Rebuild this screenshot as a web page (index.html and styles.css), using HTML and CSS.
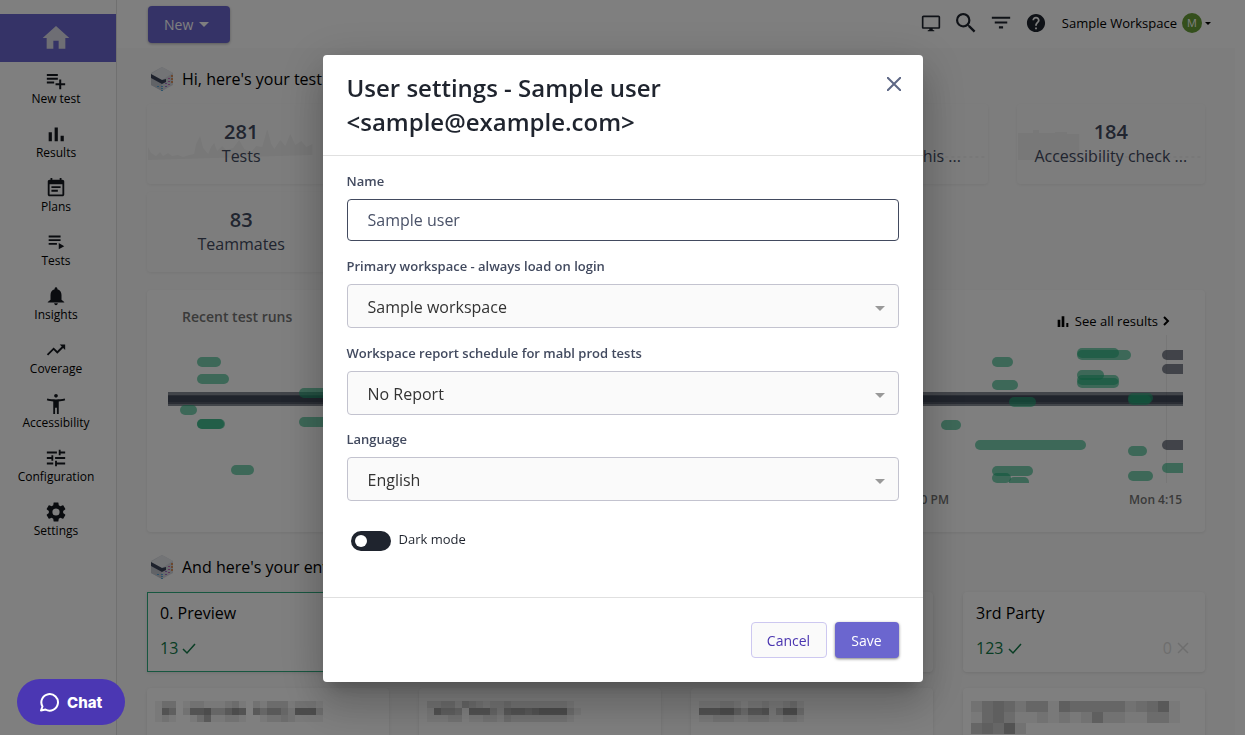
FILE: index.html
```html
<!DOCTYPE html>
<html lang="en">
<head>
<meta charset="UTF-8">
<meta name="viewport" content="width=device-width, initial-scale=1.0">
<title>Home</title>
<link rel="stylesheet" href="styles.css">
</head>
<body>
<div class="app">
    <nav class="sidebar">
        <a href="#" class="home" aria-label="Home">
            <svg width="32" height="32" viewBox="0 0 24 24"><path d="M10 20v-6h4v6h5v-8h3L12 3 2 12h3v8z"/></svg>
        </a>
        <a href="#" class="nav-item">
            <svg viewBox="0 0 24 24"><path d="M14 9.500H2v2.200h12zM14 5.500H2v2.200h12zM2 15.700h8v-2.200H2zM15.500 15.500v-4h2.200v4H22v2.200h-4.300V22h-2.200v-4.300h-4v-2.200z"/></svg>
            <span>New test</span>
        </a>
        <a href="#" class="nav-item">
            <svg viewBox="0 0 24 24"><path d="M4 10h3.500v10H4zm6.500-5H14v15h-3.500zM17 14h3.500v6H17z"/></svg>
            <span>Results</span>
        </a>
        <a href="#" class="nav-item">
            <svg viewBox="0 0 24 24"><path d="M17 10H7v2h10v-2zm2-7h-1V1h-2v2H8V1H6v2H5c-1.100 0-2 .9-2 2v14c0 1.100.9 2 2 2h14c1.100 0 2-.9 2-2V5c0-1.100-.9-2-2-2zm0 16H5V8h14v11zm-5-5H7v2h7v-2z"/></svg>
            <span>Plans</span>
        </a>
        <a href="#" class="nav-item">
            <svg viewBox="0 0 24 24"><path d="M4 5h13v2H4zm0 4h13v2H4zm0 4h9v2H4zm11 0v7l6-3.500z"/></svg>
            <span>Tests</span>
        </a>
        <a href="#" class="nav-item">
            <svg viewBox="0 0 24 24"><path d="M12 22c1.100 0 2-.9 2-2h-4c0 1.100.9 2 2 2zm6-6v-5c0-3.070-1.640-5.640-4.500-6.320V4c0-.83-.67-1.500-1.500-1.500s-1.500.67-1.500 1.500v.68C7.630 5.360 6 7.920 6 11v5l-3 2.500V19h18v-.5z"/></svg>
            <span>Insights</span>
        </a>
        <a href="#" class="nav-item">
            <svg viewBox="0 0 24 24"><path d="M16 6l2.290 2.290-4.880 4.880-4-4L2 16.590 3.410 18l6-6 4 4 6.300-6.290L22 12V6z"/></svg>
            <span>Coverage</span>
        </a>
        <a href="#" class="nav-item">
            <svg viewBox="0 0 24 24"><path d="M12 1c1.100 0 2 .9 2 2s-.9 2-2 2-2-.9-2-2 .9-2 2-2zm10 7c-2 .6-5 1-7 1.200V23h-2v-7h-2v7H9V9.200C7 9 4 8.600 2 8l.5-2C5.500 6.800 9 7 12 7s6.500-.2 9.500-1z"/></svg>
            <span>Accessibility</span>
        </a>
        <a href="#" class="nav-item">
            <svg viewBox="0 0 24 24"><path d="M2 17v2h7v-2H2zM2 5v2h11V5H2zm11 16v-2h9v-2h-9v-2h-2v6h2zM7 9v2H2v2h5v2h2V9H7zm15 4v-2H11v2h11zm-7-4h2V7h5V5h-5V3h-2v6z"/></svg>
            <span>Configuration</span>
        </a>
        <a href="#" class="nav-item">
            <svg viewBox="1 1 22 22"><path fill-rule="evenodd" d="M19.140 12.940c.04-.3.060-.61.060-.94s-.02-.64-.07-.94l2.030-1.580c.18-.14.23-.41.120-.61l-1.920-3.320c-.12-.22-.37-.29-.59-.22l-2.390.96c-.5-.38-1.030-.7-1.620-.94L14.400 2.810c-.04-.24-.24-.41-.48-.41h-3.840c-.24 0-.43.17-.47.41L9.250 5.350c-.59.24-1.130.57-1.620.94l-2.390-.96c-.22-.08-.47 0-.59.22L2.740 8.870c-.12.21-.08.47.120.61l2.030 1.580c-.05.3-.09.63-.09.94s.02.64.070.94l-2.030 1.580c-.18.14-.23.41-.12.61l1.920 3.320c.12.22.37.29.59.22l2.390-.96c.5.38 1.030.7 1.620.94l.36 2.540c.05.24.24.41.48.41h3.840c.24 0 .44-.17.47-.41l.36-2.540c.59-.24 1.130-.56 1.620-.94l2.390.96c.22.08.47 0 .59-.22l1.920-3.320c.12-.22.070-.47-.12-.61l-2.010-1.580zM12 15.600a3.600 3.600 0 110-7.200 3.600 3.600 0 010 7.200z"/></svg>
            <span>Settings</span>
        </a>
    </nav>

    <div class="page">
        <header class="topbar">
            <button type="button" class="btn-new">New <i class="caret"></i></button>
            <div class="tools">
                <svg viewBox="0 0 24 24"><path d="M21 3H3c-1.100 0-2 .9-2 2v12c0 1.100.9 2 2 2h7v1l-2 1v1h8v-1l-2-1v-1h7c1.100 0 2-.9 2-2V5c0-1.100-.9-2-2-2zm0 14H3V5h18v12z"/></svg>
                <svg viewBox="3 3 18 18"><path d="M15.500 14h-.79l-.28-.27A6.470 6.470 0 0016 9.500 6.500 6.500 0 109.500 16c1.610 0 3.090-.59 4.230-1.570l.27.28v.79l5 4.990L20.490 19l-4.990-5zm-6 0C7.010 14 5 11.990 5 9.500S7.010 5 9.500 5 14 7.010 14 9.500 11.990 14 9.500 14z"/></svg>
                <svg viewBox="0 0 24 24"><path d="M9.500 18.500h5V16h-5v2.500zM1 4.500V7h22V4.500H1zm3.500 8.200h15v-2.400h-15z"/></svg>
                <svg viewBox="1 1 22 22"><path d="M12 2C6.480 2 2 6.480 2 12s4.480 10 10 10 10-4.480 10-10S17.520 2 12 2zm1 17h-2v-2h2v2zm2.070-7.750l-.9.92C13.450 12.900 13 13.500 13 15h-2v-.5c0-1.100.45-2.100 1.170-2.830l1.240-1.260c.37-.36.59-.86.59-1.410 0-1.100-.9-2-2-2s-2 .9-2 2H8c0-2.210 1.790-4 4-4s4 1.790 4 4c0 .88-.36 1.680-.93 2.250z"/></svg>
            </div>
            <div class="workspace">
                <span>Sample Workspace</span>
                <span class="avatar">M</span>
                <i class="caret caret-small"></i>
            </div>
        </header>

        <main class="content">
            <h2 class="section-title"><svg class="logo" viewBox="0 0 24 24"><use href="#cube"/></svg>Hi, here's your test</h2>

            <div class="stats">
                <div class="stat">
                    <svg class="spark" viewBox="0 0 188 30" preserveAspectRatio="none"><path d="M1 30V17l3 6 5 3 4-4 3 4 5-3 4 3 6-1 5 2 6-2 5-1 2-10 4-8 3 12 5 6 3-7 3-4 3 8 5-5 4 4 7-2 6-8 5 9 7 3 5-6 6 1 5-18 4 15 3 5 6-9 5 6 5-12 5 11 6-4 5 6 6-3v11z"/></svg>
                    <strong>281</strong><span>Tests</span>
                </div>
                <div class="stat"></div>
                <div class="stat"></div>
                <div class="stat">
                    <svg class="spark" viewBox="0 0 188 30" preserveAspectRatio="none"><path class="dots" d="M2 27h184"/></svg>
                    <strong>965</strong><span>Test runs in this ...</span>
                </div>
                <div class="stat">
                    <svg class="spark" viewBox="0 0 188 30" preserveAspectRatio="none"><path d="M1 30V3h15V0h6v3h16V2h12v2h12v26z"/><path class="dots" d="M66 27h120"/></svg>
                    <strong>184</strong><span>Accessibility check ...</span>
                </div>
                <div class="stat"><strong>83</strong><span>Teammates</span></div>
            </div>

            <section class="runs">
                <div class="runs-head">
                    <h3>Recent test runs</h3>
                    <a href="#" class="see-all">
                        <svg width="16" height="16" viewBox="0 0 24 24"><path d="M4 10h4v11H4zm6-5h4v16h-4zm7 10h3v6h-3z"/></svg>
                        See all results
                        <svg width="8" height="10" viewBox="0 0 8 10"><path class="line" d="M2 1l4 4-4 4"/></svg>
                    </a>
                </div>
                <svg class="timeline" viewBox="0 0 1015 148">
                    <path class="grid" d="M998.500 0v148"/>
                    <g class="busy">
                        <rect x="0" y="57" width="1015" height="10"/>
                        <rect x="0" y="61" width="1015" height="8"/>
                        <rect x="0" y="60" width="1015" height="11"/>
                    </g>
                    <g class="other">
                        <rect x="994" y="15" width="40" height="10" rx="5"/>
                        <rect x="994" y="29" width="40" height="10" rx="5"/>
                        <rect x="994" y="105" width="40" height="10" rx="5"/>
                    </g>
                    <g class="passed">
                        <rect x="29" y="22" width="24" height="10" rx="5"/>
                        <rect x="29" y="39" width="32" height="10" rx="5"/>
                        <rect x="12" y="70" width="17" height="10" rx="5"/>
                        <rect x="29" y="84" width="27" height="10" rx="5"/>
                        <rect x="29" y="84" width="28" height="10" rx="5"/>
                        <rect x="131" y="53" width="44" height="10" rx="5"/>
                        <rect x="131" y="82" width="44" height="10" rx="5"/>
                        <rect x="63" y="130" width="23" height="10" rx="5"/>
                        <rect x="824" y="22" width="21" height="10" rx="5"/>
                        <rect x="824" y="45" width="26" height="10" rx="5"/>
                        <rect x="841" y="62" width="27" height="10" rx="5"/>
                        <rect x="773" y="85" width="20" height="10" rx="5"/>
                        <rect x="807" y="105" width="111" height="10" rx="5"/>
                        <rect x="824" y="131" width="41" height="10" rx="5"/>
                        <rect x="824" y="138" width="19" height="10" rx="5"/>
                        <rect x="841" y="142" width="20" height="10" rx="5"/>
                        <rect x="909" y="13" width="42" height="10" rx="5"/>
                        <rect x="909" y="15" width="54" height="10" rx="5"/>
                        <rect x="909" y="35" width="27" height="10" rx="5"/>
                        <rect x="909" y="40" width="42" height="10" rx="5"/>
                        <rect x="909" y="43" width="42" height="10" rx="5"/>
                        <rect x="960" y="58" width="25" height="10" rx="5"/>
                        <rect x="960" y="60" width="23" height="10" rx="5"/>
                        <rect x="960" y="111" width="19" height="10" rx="5"/>
                        <rect x="960" y="136" width="25" height="10" rx="5"/>
                        <rect x="994" y="128" width="40" height="10" rx="5"/>
                    </g>
                </svg>
                <div class="axis"><span>3:30 PM</span><span>Mon 4:15</span></div>
            </section>

            <h2 class="section-title"><svg class="logo" viewBox="0 0 24 24"><use href="#cube"/></svg>And here's your environments</h2>

            <div class="suites">
                <div class="suite selected">
                    <h4>0. Preview</h4>
                    <p><span class="ok">13 <svg width="14" height="14" viewBox="0 0 14 14"><path class="line" d="M1 8l4 4 8-9"/></svg></span></p>
                </div>
                <div class="suite"></div>
                <div class="suite"></div>
                <div class="suite">
                    <h4>3rd Party</h4>
                    <p>
                        <span class="ok">123 <svg width="14" height="14" viewBox="0 0 14 14"><path class="line" d="M1 8l4 4 8-9"/></svg></span>
                        <span class="bad">0 <svg width="14" height="14" viewBox="0 0 14 14"><path class="line" d="M2 2l10 10M12 2L2 12"/></svg></span>
                    </p>
                </div>
                <div class="suite masked"><svg class="mosaic" data-cell="7" data-rows="133012211123102133312221,175027784468706466428883,121001361122100122321111"></svg></div>
                <div class="suite masked"><svg class="mosaic" data-cell="7" data-rows="2233143212232222222210,1755407774267767888831,1112201122132222222210"></svg></div>
                <div class="suite masked"><svg class="mosaic" data-cell="7" data-rows="111221011211231,777885366714883,112221122211221"></svg></div>
                <div class="suite masked"><svg class="mosaic" data-cell="11" data-rows="2454244154444423461,1453112121252211331,4547200000000000000"></svg></div>
            </div>
        </main>
    </div>
</div>

<!-- shared logo -->
<svg class="defs" width="0" height="0">
    <symbol id="cube" viewBox="0 0 24 24">
        <path fill="#d3d6dd" d="M12 0l11 6v12l-11 6-11-6V6z"/>
        <path fill="#e6e8ec" d="M12 0l11 6-11 7L1 7z"/>
        <path fill="#c2c6cf" d="M1 11l11 5v8L1 18z"/>
        <path fill="#3a4258" d="M1 7l11 6 4-1v3l-4 2-11-6z"/>
        <path stroke="#d9905f" stroke-width="2" stroke-dasharray="2 1" d="M22 8v9"/>
        <path stroke="#c466b4" stroke-width="2" stroke-dasharray="1 2" d="M19 11v8"/>
        <path stroke="#a070c8" stroke-width="2" stroke-dasharray="1 2" d="M16 16v6"/>
        <path stroke="#5aa6d6" stroke-width="2" stroke-dasharray="1 1" d="M12 19v5M8 19v2"/>
    </symbol>
</svg>

<div class="backdrop">
    <form class="modal" role="dialog" aria-labelledby="modal-title">
        <div class="modal-head">
            <h1 id="modal-title">User settings - Sample user &lt;sample@example.com&gt;</h1>
            <button type="button" class="close" aria-label="Close">
                <svg width="14" height="14" viewBox="0 0 14 14"><path class="line" d="M0 0l14 14M14 0L0 14"/></svg>
            </button>
        </div>
        <div class="modal-body">
            <label for="name">Name</label>
            <input type="text" id="name" class="field" value="Sample user">

            <label for="workspace">Primary workspace - always load on login</label>
            <div class="select">
                <select id="workspace" class="field"><option>Sample workspace</option></select>
            </div>

            <label for="report">Workspace report schedule for mabl prod tests</label>
            <div class="select">
                <select id="report" class="field"><option>No Report</option></select>
            </div>

            <label for="language">Language</label>
            <div class="select">
                <select id="language" class="field"><option>English</option></select>
            </div>

            <div class="switch-row">
                <input type="checkbox" id="dark" class="switch">
                <label for="dark">Dark mode</label>
            </div>
        </div>
        <div class="modal-foot">
            <button type="button" class="btn btn-cancel">Cancel</button>
            <button type="button" class="btn btn-save">Save</button>
        </div>
    </form>
</div>

<button type="button" class="chat">
    <svg width="20" height="20" viewBox="0 0 20 20"><path d="M2 18.500L3.500 14.500A8.300 8.300 0 1 1 6.500 17.500z"/></svg>
    Chat
</button>

<script src="script.js"></script>
</body>
</html>
```

FILE: styles.css
```css
* {
    box-sizing: border-box;
}
body {
    margin: 0;
    font-family: "Open Sans", "Noto Sans", sans-serif;
    font-size: 16px;
    color: #1f242e;
    background-color: #fff;
    overflow: hidden;
}
h1, h2, h3, h4, p {
    margin: 0;
    font-weight: 400;
}
a {
    color: inherit;
    text-decoration: none;
}
button, input, select {
    font-family: inherit;
}
.defs {
    position: absolute;
}
.line {
    fill: none;
    stroke: currentColor;
    stroke-width: 2;
}
.caret {
    display: inline-block;
    border: 5px solid transparent;
    border-top-color: currentColor;
    border-bottom: 0;
}
.caret-small {
    border-width: 3px;
    border-bottom: 0;
}
.app {
    display: flex;
    height: 100vh;
    overflow: hidden;
}

/* Sidebar */
.sidebar {
    flex: 0 0 117px;
    padding-top: 14px;
    border-right: 1px solid #e0e0e0;
}
.home {
    display: flex;
    align-items: center;
    justify-content: center;
    height: 48px;
    margin-bottom: 7px;
    padding-right: 4px;
    background-color: #6b66cf;
    fill: #dddde8;
}
.nav-item {
    display: flex;
    flex-direction: column;
    align-items: center;
    height: 54px;
    padding-right: 4px;
    font-size: 12px;
    line-height: 16px;
    color: #000;
}
.nav-item svg {
    width: 22px;
    height: 22px;
    fill: #15181f;
}

/* Top bar */
.page {
    flex: 1;
    min-width: 0;
}
.topbar {
    display: flex;
    align-items: center;
    height: 48px;
    padding: 0 34px 0 31px;
}
.btn-new {
    display: flex;
    align-items: center;
    gap: 6px;
    height: 37px;
    padding: 0 21px 0 16px;
    border: none;
    border-radius: 4px;
    background-color: #6b66cf;
    box-shadow: 0 1px 3px rgba(0,0,0,0.3);
    color: #fff;
    font-size: 14px;
}
.tools {
    display: flex;
    gap: 15px;
    margin-left: auto;
    padding-bottom: 2px;
}
.tools svg {
    width: 20px;
    height: 20px;
    fill: #1f242e;
}
.workspace {
    display: flex;
    align-items: center;
    gap: 5px;
    margin-left: 16px;
    padding-bottom: 2px;
    font-size: 13px;
    color: #000;
}
.avatar {
    width: 20px;
    height: 20px;
    border-radius: 50%;
    background-color: #689f38;
    color: #fff;
    font-size: 11px;
    line-height: 20px;
    text-align: center;
}
.workspace .caret {
    margin-left: -2px;
}

/* Content */
.content {
    height: 100%;
    margin-right: 10px;
    padding: 19px 30px;
    background-color: #fafafa;
}
.section-title {
    display: flex;
    align-items: center;
    gap: 8px;
    height: 24px;
    margin-bottom: 13px;
    font-size: 16px;
    color: #000;
}
.logo {
    width: 24px;
    height: 24px;
    margin-left: 3px;
}
.stats {
    display: grid;
    grid-template-columns: repeat(5, 1fr);
    gap: 8px 29px;
}
.stat {
    display: flex;
    position: relative;
    flex-direction: column;
    align-items: center;
    height: 80px;
    padding-top: 16px;
    border-radius: 4px;
    background-color: #fbfbfb;
    box-shadow: 0 1px 3px rgba(0,0,0,0.06);
    line-height: 24px;
    color: #424a5f;
}
.stat strong {
    position: relative;
    font-size: 20px;
    font-weight: 600;
}
.stat span {
    position: relative;
}
.spark {
    position: absolute;
    left: 0;
    top: 26px;
    width: 100%;
    height: 30px;
    fill: #f0f0f0;
}
.dots {
    fill: none;
    stroke: #f0f0f0;
    stroke-width: 2;
    stroke-dasharray: 3 3;
}
.runs {
    height: 242px;
    margin: 18px 0 23px;
    padding: 16px 22px 0 21px;
    border-radius: 4px;
    background-color: #fff;
    box-shadow: 0 1px 3px rgba(0,0,0,0.08);
}
.runs-head {
    display: flex;
    justify-content: space-between;
    padding: 0 13px 0 14px;
}
.runs-head h3 {
    font-size: 14px;
    font-weight: 600;
    line-height: 22px;
    color: #757575;
}
.see-all {
    display: flex;
    align-items: center;
    gap: 4px;
    height: 29px;
    font-size: 13px;
    color: #000;
}
.timeline {
    display: block;
    width: 100%;
}
.grid {
    stroke: #eee;
}
.busy {
    fill: #333c4d;
    fill-opacity: 0.6;
}
.other {
    fill: #2f374a;
    fill-opacity: 0.6;
}
.passed {
    fill: #22b17c;
    fill-opacity: 0.6;
}
.axis {
    display: flex;
    justify-content: flex-end;
    gap: 180px;
    padding: 9px 1px 0 0;
    font-size: 12px;
    font-weight: 600;
    line-height: 16px;
    color: #757575;
}
.suites {
    display: grid;
    grid-template-columns: repeat(4, 1fr);
    gap: 16px 30px;
}
.suite {
    height: 80px;
    padding: 8px 13px;
    border-radius: 4px;
    background-color: #fff;
    box-shadow: 0 1px 3px rgba(0,0,0,0.1);
}
.suite h4 {
    font-size: 16px;
    line-height: 26px;
    color: #000;
}
.suite p {
    display: flex;
    justify-content: space-between;
    padding: 10px 2px 0 0;
    line-height: 24px;
}
.suite .line {
    stroke-width: 1.5;
}
.selected {
    padding: 7px 12px;
    border: 1px solid #2fae80;
    border-radius: 0;
}
.ok {
    color: #127a48;
}
.bad {
    color: #dcdcdc;
}
.ok svg, .bad svg {
    vertical-align: -1px;
}
.masked {
    padding: 13px 8px;
}
.mosaic {
    display: block;
}

/* Modal */
.backdrop {
    display: flex;
    position: fixed;
    inset: 0;
    align-items: center;
    justify-content: center;
    padding-top: 2px;
    background-color: rgba(0,0,0,0.5);
}
.modal {
    width: 600px;
    border-radius: 4px;
    background-color: #fff;
    box-shadow: 0 11px 15px -7px rgba(0,0,0,0.2), 0 24px 38px 3px rgba(0,0,0,0.14), 0 9px 46px 8px rgba(0,0,0,0.12);
}
.modal-head {
    display: flex;
    align-items: flex-start;
    justify-content: space-between;
    padding: 16px 22px 16px 24px;
    border-bottom: 1px solid #e0e0e0;
}
.modal-head h1 {
    max-width: 400px;
    font-size: 24px;
    font-weight: 600;
    line-height: 34px;
}
.close {
    display: flex;
    margin-top: 6px;
    padding: 0;
    border: none;
    background: none;
    color: #5d6785;
}
.modal-body {
    padding: 16px 24px 46px;
    border-bottom: 1px solid #e0e0e0;
}
.modal-body > label {
    display: block;
    margin-bottom: 8px;
    font-size: 13px;
    font-weight: 600;
    line-height: 19px;
    color: #424a5f;
}
.field {
    display: block;
    width: 100%;
    height: 44px;
    padding: 2px 20px 0;
    border: 1px solid #c3c3cf;
    border-radius: 4px;
    background-color: #fafafa;
    color: #333;
    font-size: 16px;
    appearance: none;
}
input.field {
    height: 42px;
    margin-bottom: 16px;
    padding: 0 20px;
    border-color: #424a5f;
    background-color: #fff;
    color: #4a5268;
}
.select {
    position: relative;
    margin-bottom: 16px;
}
.select::after {
    content: "";
    position: absolute;
    right: 14px;
    top: 22px;
    border: 5px solid transparent;
    border-top-color: #999;
    border-bottom: 0;
}
.modal-body .select:nth-of-type(2) {
    margin-bottom: 15px;
}
.switch-row {
    display: flex;
    align-items: flex-start;
    gap: 8px;
    margin-top: 30px;
    padding-left: 4px;
    font-size: 13px;
    line-height: 17px;
}
.switch {
    width: 40px;
    height: 20px;
    margin: 0;
    padding: 4px;
    border-radius: 10px;
    background-color: #1f242e;
    appearance: none;
}
.switch::before {
    content: "";
    display: block;
    width: 12px;
    height: 12px;
    border-radius: 50%;
    background-color: #fff;
}
.switch:checked::before {
    margin-left: 20px;
}
.modal-foot {
    display: flex;
    justify-content: flex-end;
    gap: 8px;
    padding: 24px;
}
.btn {
    height: 36px;
    padding: 0 16px;
    border: none;
    border-radius: 4px;
    font-size: 14px;
}
.btn-cancel {
    min-width: 76px;
    padding: 0 15px;
    border: 1px solid #cdc8f0;
    background-color: #fafafa;
    color: #4a35b0;
}
.btn-save {
    min-width: 64px;
    background-color: #6b66cf;
    box-shadow: 0 1px 3px rgba(0,0,0,0.5);
    color: #fff;
}

/* Chat launcher */
.chat {
    display: flex;
    position: fixed;
    left: 17px;
    bottom: 10px;
    align-items: center;
    gap: 8px;
    height: 46px;
    padding: 0 23px 0 22px;
    border: none;
    border-radius: 23px;
    background-color: #4b37b3;
    color: #fff;
    font-family: Inter, sans-serif;
    font-size: 15px;
    font-weight: 800;
}
.chat svg {
    fill: none;
    stroke: #fff;
    stroke-width: 2;
    stroke-linejoin: round;
}
```

FILE: script.js
```js
// Each digit is the darkness of one block of a masked name
document.querySelectorAll('.mosaic').forEach(function (svg) {
    const cell = Number(svg.dataset.cell);
    const rows = svg.dataset.rows.split(',');
    svg.setAttribute('width', rows[0].length * cell);
    svg.setAttribute('height', rows.length * cell);
    rows.forEach(function (row, y) {
        row.split('').forEach(function (level, x) {
            const rect = document.createElementNS('http://www.w3.org/2000/svg', 'rect');
            rect.setAttribute('x', x * cell);
            rect.setAttribute('y', y * cell);
            rect.setAttribute('width', cell);
            rect.setAttribute('height', cell);
            rect.setAttribute('fill-opacity', level * 0.05);
            svg.appendChild(rect);
        });
    });
});
```
